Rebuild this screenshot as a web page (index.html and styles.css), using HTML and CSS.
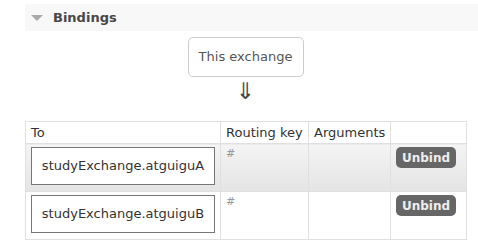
FILE: index.html
```html
<!DOCTYPE html>
<html lang="en">
<head>
  <meta charset="UTF-8">
  <title>Bindings</title>
  <link rel="stylesheet" href="styles.css">
</head>
<body>
  <div class="section">
    <h2 class="section-title"><span class="toggle"></span>Bindings</h2>
    <div class="bindings">
      <div class="source">
        <span class="source-box">This exchange</span>
        <div class="arrow">&#8659;</div>
      </div>
      <table class="list">
        <colgroup>
          <col class="col-to">
          <col class="col-key">
          <col class="col-args">
          <col class="col-act">
        </colgroup>
        <thead>
          <tr>
            <th>To</th>
            <th>Routing key</th>
            <th>Arguments</th>
            <th></th>
          </tr>
        </thead>
        <tbody>
          <tr class="alt1">
            <td><span class="dest">studyExchange.atguiguA</span></td>
            <td class="key">#</td>
            <td></td>
            <td><button class="unbind">Unbind</button></td>
          </tr>
          <tr class="alt2">
            <td><span class="dest">studyExchange.atguiguB</span></td>
            <td class="key">#</td>
            <td></td>
            <td><button class="unbind">Unbind</button></td>
          </tr>
        </tbody>
      </table>
    </div>
  </div>
</body>
</html>
```

FILE: styles.css
```css
* {
  box-sizing: border-box;
}

body {
  margin: 0;
  padding: 4px 0 0 25px;
  background: #fff;
  font-family: "DejaVu Sans", Verdana, sans-serif;
  font-size: 13px;
  color: #444;
  overflow: hidden;
}

.section-title {
  display: flex;
  align-items: center;
  height: 27px;
  margin: 0;
  padding-left: 6px;
  background: #f8f8f8;
  font-size: 13px;
  font-weight: bold;
  color: #484848;
}

.toggle {
  width: 0;
  height: 0;
  margin-right: 10px;
  border-left: 6px solid transparent;
  border-right: 6px solid transparent;
  border-top: 6px solid #aaa;
}

.bindings {
  width: 441px;
}

.source {
  text-align: center;
  padding-top: 6px;
}

.source-box {
  display: inline-block;
  width: 116px;
  height: 40px;
  line-height: 38px;
  border: 1px solid #ccc;
  border-radius: 5px;
  font-size: 13px;
  color: #555;
}

.arrow {
  height: 44px;
  font-size: 23px;
  line-height: 28px;
  color: #444;
}

.list {
  border-collapse: collapse;
  table-layout: fixed;
  width: 441px;
}

.col-to { width: 195px; }
.col-key { width: 88px; }
.col-args { width: 82px; }
.col-act { width: 76px; }

.list th {
  height: 22px;
  padding: 0 5px;
  border: 1px solid #e0e0e0;
  text-align: left;
  font-weight: normal;
  color: #333;
  background: #fff;
}

.list td {
  height: 48px;
  padding: 3px 5px 0;
  border: 1px solid #e0e0e0;
  vertical-align: top;
}

.alt1 td {
  background: linear-gradient(#f4f4f4, #e4e4e4);
}

.alt2 td {
  background: #fff;
}

.dest {
  display: block;
  height: 38px;
  line-height: 36px;
  border: 1px solid #777;
  background: #fff;
  text-align: center;
  font-size: 13px;
  color: #333;
}

.key {
  font-size: 11px;
  color: #999;
}

.unbind {
  display: block;
  width: 60px;
  height: 21px;
  padding: 0;
  border: none;
  border-radius: 5px;
  background: #666;
  color: #eee;
  font-family: inherit;
  font-size: 12px;
  font-weight: bold;
  cursor: pointer;
}
```
